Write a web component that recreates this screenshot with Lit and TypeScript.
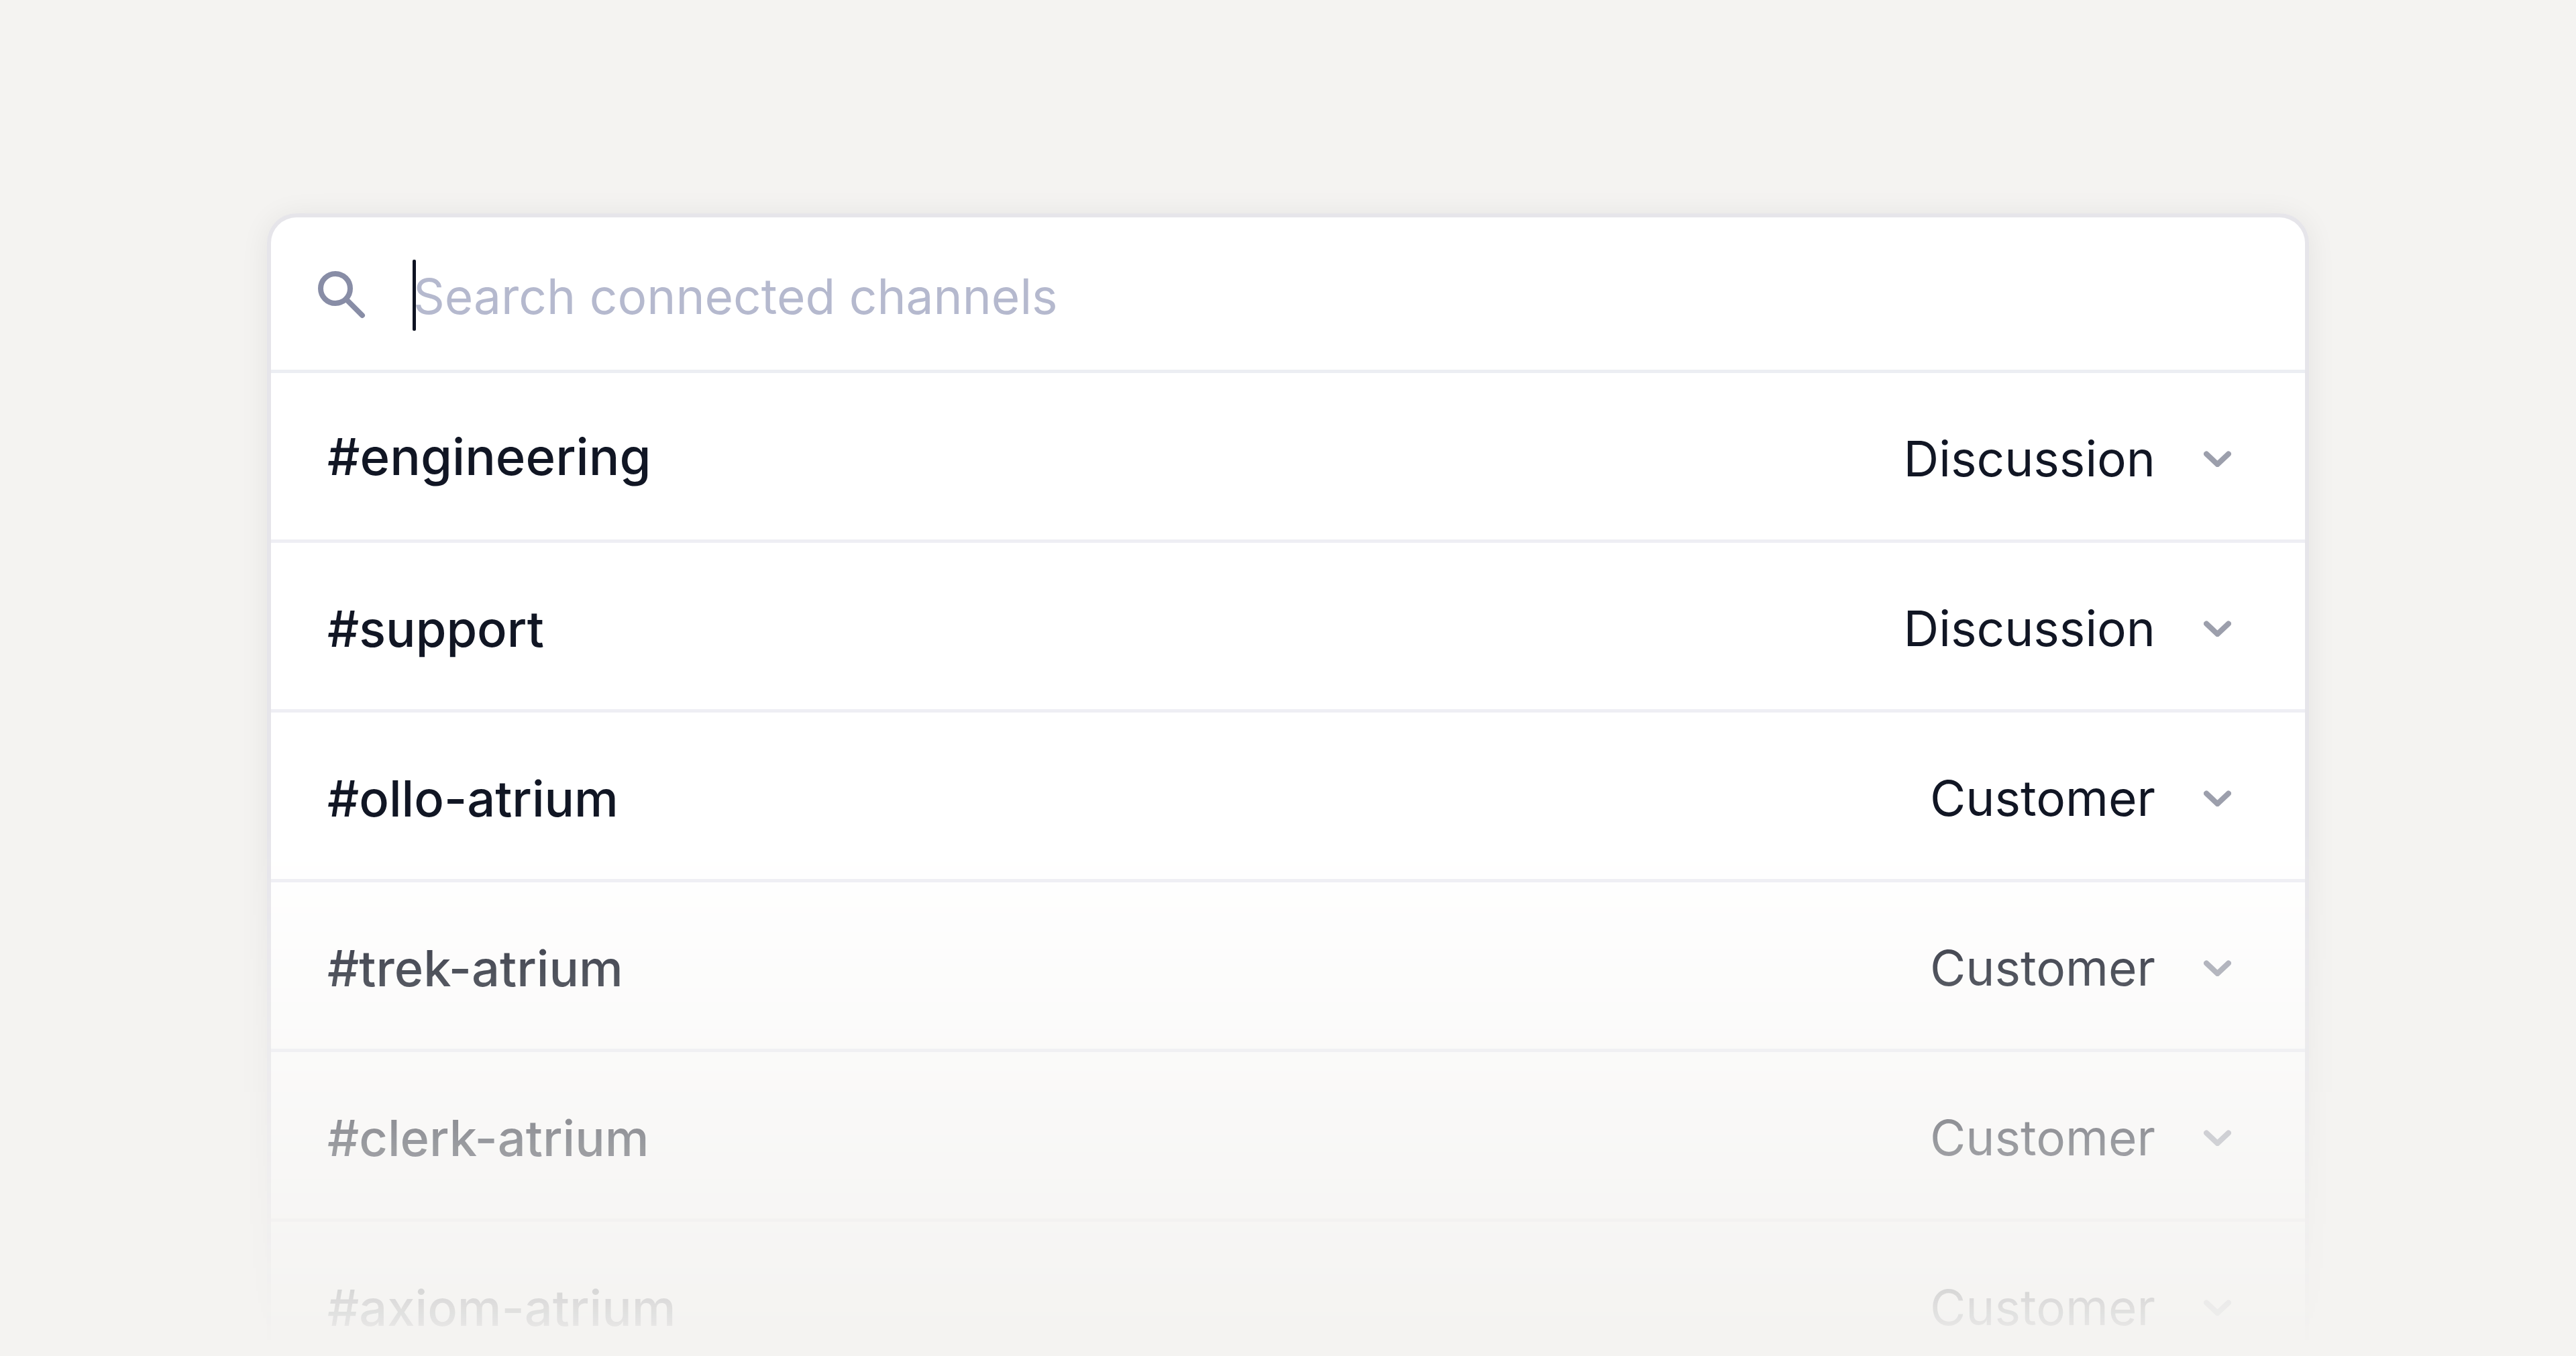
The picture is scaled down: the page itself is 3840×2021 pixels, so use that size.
import { LitElement, html, css, svg } from "lit";
import { customElement, property } from "lit/decorators.js";
import { classMap } from "lit/directives/class-map.js";

type Kind = "Discussion" | "Customer";

interface Channel {
  name: string;
  kind: Kind;
  lead?: boolean;
}

const KINDS: Kind[] = ["Discussion", "Customer"];

const CHANNELS: Channel[] = [
  { name: "engineering", kind: "Discussion", lead: true },
  { name: "support", kind: "Discussion" },
  { name: "ollo-atrium", kind: "Customer" },
  { name: "trek-atrium", kind: "Customer" },
  { name: "clerk-atrium", kind: "Customer" },
  { name: "axiom-atrium", kind: "Customer" },
];

const searchIcon = svg`
  <circle cx="26" cy="26" r="22" />
  <path d="M42 42 L66 66" />
`;

const chevronIcon = svg`<path d="M4 4.5 L20.5 20 L37 4.5" />`;

@customElement("channel-row")
export class ChannelRow extends LitElement {
  @property({ attribute: false }) channel!: Channel;

  static styles = css`
    :host {
      box-sizing: border-box;
      display: flex;
      align-items: center;
      justify-content: space-between;
      flex: none;
      height: 253px;
      padding: 8px 110px 0 84px;
      border-bottom: 5px solid #eeeef4;
      color: #111624;
    }
    .name {
      font-size: 74px;
      font-weight: 500;
      line-height: 80px;
    }
    .lead {
      font-size: 76px;
      padding-bottom: 8px;
    }
    .picker {
      display: grid;
      align-items: center;
    }
    .kind,
    .chevron {
      grid-area: 1 / 1;
    }
    .kind {
      appearance: none;
      field-sizing: content;
      height: 96px;
      margin: 0;
      padding: 0 113px 0 0;
      border: 0;
      outline: 0;
      background: transparent;
      color: inherit;
      font-family: inherit;
      font-size: 73px;
      font-weight: 400;
      line-height: 96px;
      text-align-last: right;
      cursor: pointer;
    }
    .chevron {
      justify-self: end;
      width: 41px;
      height: 24px;
      fill: none;
      stroke: #9c9fac;
      stroke-width: 8;
      stroke-linecap: round;
      stroke-linejoin: round;
      pointer-events: none;
    }
  `;

  render() {
    const { name, kind, lead } = this.channel;
    return html`
      <label class=${classMap({ name: true, lead: !!lead })} for="kind">#${name}</label>
      <div class="picker">
        <select class="kind" id="kind">
          ${KINDS.map((k) => html`<option ?selected=${k === kind}>${k}</option>`)}
        </select>
        <svg class="chevron" viewBox="0 0 41 24" aria-hidden="true">${chevronIcon}</svg>
      </div>
    `;
  }
}

@customElement("app-root")
export class AppRoot extends LitElement {
  static styles = css`
    :host {
      display: block;
      background: #f4f3f1;
      font-family: Inter, "Liberation Sans", sans-serif;
    }
    .stage {
      box-sizing: border-box;
      display: flex;
      height: 100vh;
      padding: 318px 398px 24px;
      mask-image: linear-gradient(to bottom, #000 61%, transparent 100%);
    }
    .panel {
      box-sizing: border-box;
      display: flex;
      flex: 1;
      flex-direction: column;
      min-width: 0;
      overflow: hidden;
      border: 6px solid #e6e5ea;
      border-bottom: 0;
      border-radius: 44px 44px 0 0;
      background: #fff;
      box-shadow: 0 4px 44px rgba(20, 10, 0, 0.07);
    }
    .search {
      box-sizing: border-box;
      display: flex;
      align-items: center;
      flex: none;
      height: 232px;
      padding: 4px 110px 0 70px;
      border-bottom: 5px solid #eceef3;
    }
    .glass {
      flex: none;
      width: 72px;
      height: 72px;
      fill: none;
      stroke: #888da6;
      stroke-width: 8;
      stroke-linecap: round;
    }
    .field {
      position: relative;
      display: flex;
      flex: 1;
      margin-left: 70px;
      padding-top: 4px;
    }
    .caret {
      position: absolute;
      top: 0;
      left: -1px;
      width: 5px;
      height: 106px;
      border-radius: 2px;
      background: #0e1322;
    }
    .query {
      flex: 1;
      min-width: 0;
      height: 102px;
      margin: 0;
      padding: 0;
      border: 0;
      outline: 0;
      background: transparent;
      color: #111624;
      font-family: inherit;
      font-size: 73px;
      caret-color: transparent;
    }
    .query::placeholder {
      color: #b5b9ce;
      opacity: 1;
    }
  `;

  render() {
    return html`
      <main class="stage">
        <section class="panel">
          <div class="search">
            <svg class="glass" viewBox="0 0 72 72" aria-hidden="true">${searchIcon}</svg>
            <div class="field">
              <input
                class="query"
                type="text"
                aria-label="Search connected channels"
                placeholder="Search connected channels"
              />
              <span class="caret"></span>
            </div>
          </div>
          ${CHANNELS.map((c) => html`<channel-row .channel=${c}></channel-row>`)}
        </section>
      </main>
    `;
  }
}
